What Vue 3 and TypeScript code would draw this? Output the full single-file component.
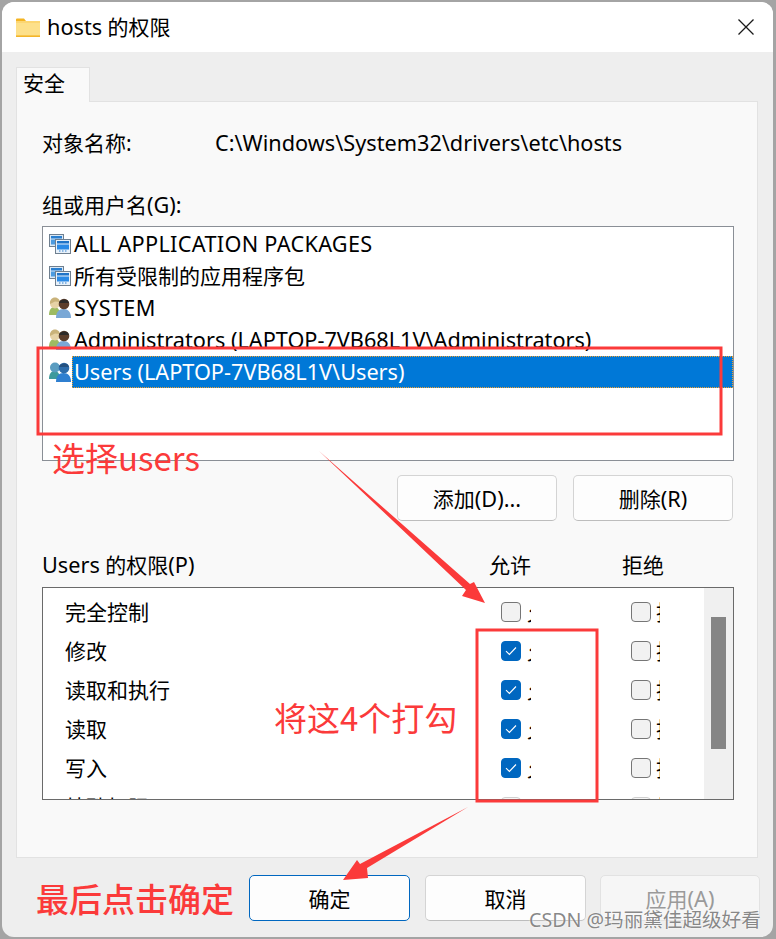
<script setup lang="ts">
interface Principal { name: string; icon: 'app' | 'group' | 'users'; selected?: boolean; caps?: boolean; cjk?: boolean }
interface Perm { name: string; allow: boolean; dim?: boolean }

const principals: Principal[] = [
  { name: 'ALL APPLICATION PACKAGES', icon: 'app', caps: true },
  { name: '所有受限制的应用程序包', icon: 'app', cjk: true },
  { name: 'SYSTEM', icon: 'group', caps: true },
  { name: 'Administrators (LAPTOP-7VB68L1V\\Administrators)', icon: 'group' },
  { name: 'Users (LAPTOP-7VB68L1V\\Users)', icon: 'users', selected: true },
]

const perms: Perm[] = [
  { name: '完全控制', allow: false },
  { name: '修改', allow: true },
  { name: '读取和执行', allow: true },
  { name: '读取', allow: true },
  { name: '写入', allow: true },
  { name: '特殊权限', allow: false, dim: true },
]
</script>

<template>
  <div class="screen">
    <div class="window">
      <header class="titlebar">
        <svg class="folder" width="24" height="19" viewBox="0 0 24 19">
          <path d="M0 1.500a1 1 0 0 1 1-1h7l2 2.500H0z" fill="#f4b422" />
          <path d="M0 3h24v16H0z" fill="#fcd672" />
          <path d="M0 5h24v12H0z" fill="#fde08a" />
          <path d="M0 17.500h24V19H0z" fill="#f3b52a" />
        </svg>
        <span class="title"><span class="latin">hosts</span> 的权限</span>
        <svg class="close" width="16" height="16" viewBox="0 0 16 16">
          <path d="M.5.5l15 15M15.500.5l-15 15" stroke="#1a1a1a" stroke-width="1.300" fill="none" />
        </svg>
      </header>

      <div class="tabs"><div class="tab">安全</div></div>

      <section class="panel">
        <div class="object-row">
          <span class="object-label">对象名称:</span>
          <span class="latin">C:\Windows\System32\drivers\etc\hosts</span>
        </div>

        <div class="group-label">组或用户名<span class="latin">(G):</span></div>
        <ul class="principals">
          <li v-for="p in principals" :key="p.name" class="principal">
            <svg v-if="p.icon === 'app'" class="picon" width="22" height="22" viewBox="0 0 22 22">
              <rect x="0.5" y="1.500" width="14" height="12" fill="#dbe9f6" stroke="#6f7f8f" />
              <rect x="2" y="3" width="11" height="2.500" fill="#2a7fd0" />
              <rect x="2" y="6.500" width="11" height="5" fill="#4c9be0" />
              <rect x="6.500" y="6.500" width="15" height="14" fill="#e8f1fa" stroke="#6f7f8f" />
              <rect x="8" y="8" width="12" height="2.500" fill="#1f74c8" />
              <rect x="8" y="11.500" width="12" height="5" fill="#2a8ae6" />
              <path d="M10 18h1.500M13 18h1.500M16 18h1.500" stroke="#2a7fd0" />
            </svg>
            <svg v-else class="picon" width="22" height="22" viewBox="0 0 22 22">
              <template v-if="p.icon === 'group'">
                <path d="M0 18c0-5 2-8 5.500-8s5.500 3 5.500 8z" fill="#9dbb62" />
                <circle cx="6" cy="6.500" r="5" fill="#e6d2a6" />
                <path d="M1 7c-.5-4 2-6.500 5-6.500S11 3 11 5L6 4.500z" fill="#c9b27a" />
                <path d="M7 21c0-6 3-9 7.500-9S22 15 22 21z" fill="#7aa8d6" />
                <circle cx="15" cy="7" r="5.300" fill="#5b3d2a" />
                <path d="M10 6c.5-4 9-5.500 10 0z" fill="#2c2a28" />
              </template>
              <template v-else>
                <path d="M0 18c0-5 2-8 5.500-8s5.500 3 5.500 8z" fill="#3f9a9c" />
                <circle cx="6" cy="6.500" r="5" fill="#5a9cc0" />
                <path d="M7 21c0-6 3-9 7.500-9S22 15 22 21z" fill="#2f7fd0" />
                <circle cx="15" cy="7" r="5.300" fill="#2d6cab" />
                <path d="M10 6c.5-4 9-5.500 10 0z" fill="#24507f" />
              </template>
            </svg>
            <span class="pname" :class="{ latin: !p.cjk, selected: p.selected, caps: p.caps }">{{ p.name }}</span>
          </li>
        </ul>

        <div class="actions">
          <button class="btn">添加<span class="latin">(D)...</span></button>
          <button class="btn">删除<span class="latin">(R)</span></button>
        </div>

        <div class="perm-head">
          <span class="perm-title"><span class="latin">Users</span> 的权限<span class="latin">(P)</span></span>
          <span class="perm-allow">允许</span>
          <span>拒绝</span>
        </div>

        <div class="perm-list">
          <div class="perm-rows">
            <div v-for="perm in perms" :key="perm.name" class="perm-row">
              <span class="perm-name">{{ perm.name }}</span>
              <span class="perm-cell">
                <span class="check" :class="{ on: perm.allow, dim: perm.dim }">
                  <svg v-if="perm.allow" width="12" height="10" viewBox="0 0 12 10">
                    <path d="M1 5.200l3.400 3.300L11 1.500" stroke="#fff" stroke-width="1.100" fill="none" />
                  </svg>
                </span>
                <span class="clip clip-allow">允许</span>
              </span>
              <span class="perm-cell">
                <span class="check" :class="{ dim: perm.dim }"></span>
                <span class="clip clip-deny">拒绝</span>
              </span>
            </div>
          </div>
          <div class="scrollbar"><div class="thumb"></div></div>
        </div>
      </section>

      <footer class="footer">
        <button class="btn wide default">确定</button>
        <button class="btn wide">取消</button>
        <button class="btn disabled">应用<span class="latin">(A)</span></button>
      </footer>
    </div>

    <!-- Annotations drawn over the screenshot -->
    <svg class="marks" width="776" height="939" viewBox="0 0 776 939">
      <rect x="38" y="348" width="683" height="86" fill="none" stroke="#fb3a3a" stroke-width="3" />
      <rect x="477" y="630" width="120" height="171" fill="none" stroke="#fb3a3a" stroke-width="3" />
      <path d="M319 451L470 584L474 582L485 603L462 596L466 590Z" fill="#fb3a3a" />
      <path d="M468 807L367 868L368 878L343 880L357 860L360 864Z" fill="#fb3a3a" />
    </svg>
    <span class="note note-users">选择users</span>
    <span class="note note-four">将这4个打勾</span>
    <span class="note note-ok">最后点击确定</span>
    <span class="watermark">CSDN @玛丽黛佳超级好看</span>
  </div>
</template>

<style scoped>
.screen {
  position: relative;
  width: 776px;
  height: 939px;
  overflow: hidden;
  background: #a4a4a4;
  padding: 2px 3px 2px 2px;
  box-sizing: border-box;
  font-family: "Noto Sans", "Noto Sans CJK SC", sans-serif;
  font-size: 21px;
  color: #000;
}
.latin { font-size: 21.7px; }
.window {
  height: 935px;
  background: #eeeeee;
  border-radius: 12px;
  overflow: hidden;
  display: flex;
  flex-direction: column;
}
.titlebar {
  height: 50px;
  flex: none;
  background: #fff;
  display: flex;
  align-items: center;
  padding-left: 14px;
}
.folder { flex: none; }
.title { margin-left: 7px; line-height: 48px; }
.close { margin-left: auto; margin-right: 19px; }
.tabs {
  flex: none;
  padding: 15px 0 0 14px;
  display: flex;
}
.tab {
  width: 74px;
  height: 35px;
  box-sizing: border-box;
  margin-bottom: -1px;
  background: #f9f9f9;
  border: 1px solid #e2e2e2;
  border-bottom: none;
  padding-left: 6px;
  line-height: 30px;
  position: relative;
  z-index: 1;
}
.panel {
  flex: none;
  margin: 0 14px;
  width: 742px;
  height: 757px;
  box-sizing: border-box;
  background: #f9f9f9;
  border: 1px solid #e2e2e2;
  padding: 26px 23px 0 25px;
}
.object-row { display: flex; line-height: 30px; height: 30px; }
.object-label { width: 173px; flex: none; }
.group-label { margin-top: 32px; line-height: 30px; height: 30px; }
.principals {
  list-style: none;
  margin: 6px 0 0;
  padding: 1px 0 0;
  height: 235px;
  box-sizing: border-box;
  background: #fff;
  border: 1px solid #8a8f96;
}
.principal {
  height: 32px;
  display: flex;
  align-items: center;
  padding-left: 6px;
}
.picon { flex: none; }
.pname {
  margin-left: 1px;
  padding: 0 2px;
  line-height: 32px;
  white-space: nowrap;
}
.pname.caps { letter-spacing: 0.3px; }
.pname.selected {
  flex: 1;
  background: #0078d7;
  color: #fff;
  outline: 1px dotted #f0a030;
  outline-offset: -1px;
}
.actions {
  margin-top: 14px;
  padding-right: 1px;
  display: flex;
  justify-content: flex-end;
  gap: 16px;
}
.btn {
  width: 160px;
  height: 46px;
  box-sizing: border-box;
  background: #fdfdfd;
  border: 1px solid #d4d4d4;
  border-bottom-color: #bdbdbd;
  border-radius: 5px;
  font: inherit;
  color: #000;
  padding: 0;
}
.btn.wide { width: 161px; }
.btn.default { border-color: #0067c0; }
.btn.disabled { color: #9a9a9a; background: #f6f6f6; border-color: #e2e2e2; margin-left: -1px; }
.perm-head {
  margin-top: 29px;
  height: 30px;
  line-height: 30px;
  display: flex;
}
.perm-title { width: 447px; flex: none; }
.perm-allow { width: 133px; flex: none; }
.perm-list {
  margin-top: 7px;
  height: 213px;
  box-sizing: border-box;
  background: #fff;
  border: 1px solid #6a6a6a;
  display: flex;
  overflow: hidden;
}
.perm-rows {
  flex: 1;
  padding-top: 5px;
  overflow: hidden;
}
.perm-row {
  height: 39px;
  display: flex;
  line-height: 38px;
}
.perm-name { width: 458px; flex: none; padding-left: 22px; box-sizing: border-box; }
.perm-cell {
  width: 130px;
  flex: none;
  display: flex;
  align-items: flex-start;
}
.check {
  width: 20px;
  height: 20px;
  margin-top: 9px;
  box-sizing: border-box;
  flex: none;
  background: #f2f2f2;
  border: 1.5px solid #767676;
  border-radius: 4px;
  display: flex;
  align-items: center;
  justify-content: center;
}
.check.on { background: #0067c0; border-color: #0067c0; }
.check.dim { background: #f7f7f7; border-color: #d0d0d0; }
.clip {
  overflow: hidden;
  white-space: nowrap;
  width: 4px;
  flex: none;
}
.clip-allow { margin-left: 6px; }
.clip-deny { margin-left: 5px; }
.scrollbar {
  width: 29px;
  flex: none;
  background: #f0f0f0;
  padding: 29px 7px 0;
  box-sizing: border-box;
}
.thumb { width: 15px; height: 132px; background: #858585; }
.footer {
  flex: none;
  padding: 17px 0 0 247px;
  display: flex;
  gap: 15px;
}
.marks { position: absolute; inset: 0; pointer-events: none; }
.note {
  position: absolute;
  color: #fb3a3a;
  white-space: nowrap;
  font-family: "Noto Sans CJK SC", sans-serif;
  line-height: 44px;
}
.note-users { left: 52px; top: 435px; font-size: 33px; }
.note-four { left: 274px; top: 695px; font-size: 33px; }
.note-ok { left: 36px; top: 876px; font-size: 33px; font-weight: 500; }
.watermark {
  position: absolute;
  left: 529px;
  top: 907px;
  font-size: 19.6px;
  line-height: 26px;
  color: rgba(115, 115, 115, 0.85);
  white-space: nowrap;
  text-shadow: 0 0 2px #fff;
}
</style>
